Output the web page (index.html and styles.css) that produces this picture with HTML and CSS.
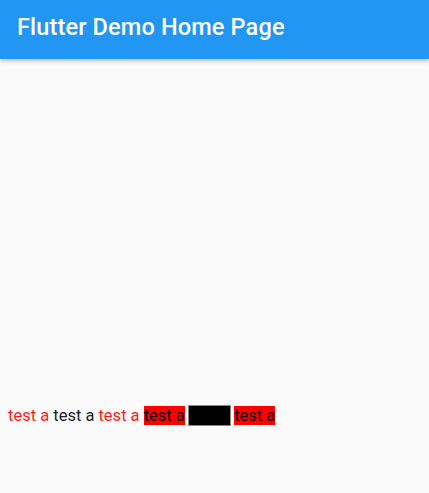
FILE: index.html
```html
<!DOCTYPE html>
<html>
<head>
<meta charset="utf-8">
<link rel="stylesheet" href="styles.css">
</head>
<body>
<header class="appbar"><h1 class="title">Flutter Demo Home Page</h1></header>
<main class="content">
  <p class="line"><span class="red">test a</span> <span class="dark">test a</span> <span class="red">test a</span> <span class="hl">test a</span> <span class="blk">test a</span> <span class="hl">test a</span></p>
</main>
</body>
</html>
```
FILE: styles.css
```css
html, body { margin: 0; padding: 0; }
body {
  width: 429px; height: 493px; overflow: hidden;
  background: #fafafa;
  font-family: Roboto, "Noto Sans", sans-serif;
}
.appbar {
  height: 59px;
  box-sizing: border-box;
  background: #2196f3;
  box-shadow: 0 2px 4px rgba(0,0,0,0.25);
  display: flex; align-items: center;
  padding: 0 17px 6px;
  position: relative;
}
.title {
  margin: 0; color: #fff;
  font-size: 23.5px; font-weight: 500;
  letter-spacing: 0.15px;
}
.content { padding: 347px 8px 0; }
.line {
  margin: 0; font-size: 16.5px; line-height: 20px;
  color: #212121;
}
.red { color: #ff1a1a; }
.dark { color: #212121; }
.hl { background: #ff0000; color: #000; }
.blk { background: #000; color: #000; outline: 1px solid #888; }
```
